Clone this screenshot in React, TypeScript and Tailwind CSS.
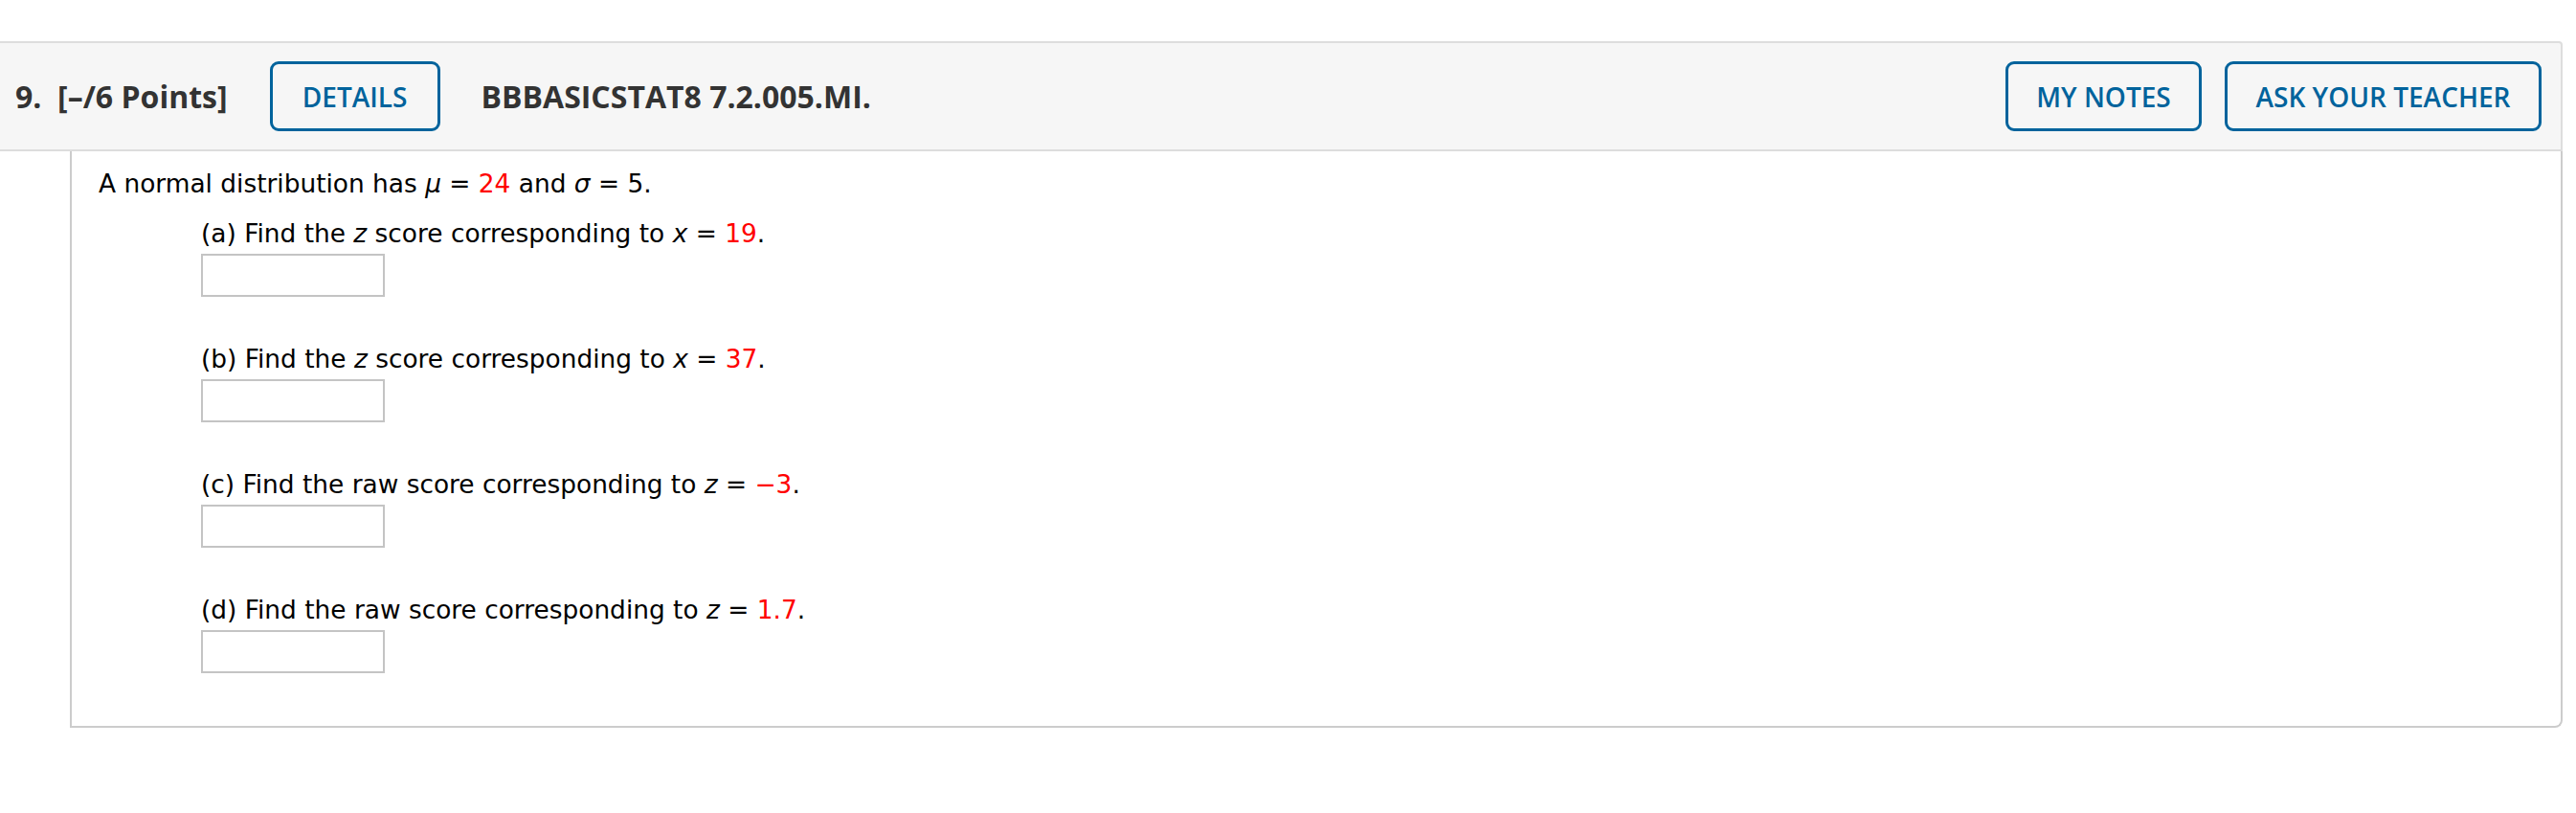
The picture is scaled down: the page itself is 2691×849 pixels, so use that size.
import React from "react";

const headFont = { fontFamily: '"Open Sans", "Liberation Sans", sans-serif' };

function OutlineButton({ children, className }: { children: React.ReactNode; className?: string }) {
    return (
        <button
            className={`h-[73px] rounded-[9px] border-[3px] border-[#00639c] bg-transparent text-[28px] font-semibold text-[#00639c] ${className ?? ""}`}
            style={headFont}
        >
            {children}
        </button>
    );
}

function Red({ children }: { children: React.ReactNode }) {
    return <span className="text-[#ff0000]">{children}</span>;
}

function AnswerBox() {
    return <div className="mt-[5px] h-[45px] w-[192px] border-2 border-[#c4c4c4] bg-white" />;
}

function Part({ label, children, first }: { label: string; children: React.ReactNode; first?: boolean }) {
    return (
        <div className={first ? "mt-[20px]" : "mt-[49px]"}>
            <p className="leading-[32px]">
                ({label}) {children}
            </p>
            <AnswerBox />
        </div>
    );
}

export default function App() {
    return (
        <div className="min-h-[849px] w-full bg-white pt-[43px]">
            <div
                className="mr-[14px] flex h-[115px] items-center rounded-tr-[4px] border-y-2 border-r-2 border-[#dddddd] bg-[#f6f6f6] pl-[16px] pr-[20px]"
                style={headFont}
            >
                <span className="whitespace-pre text-[32px] font-bold text-[#333333]">9.  [–/6 Points]</span>
                <OutlineButton className="ml-[44px] w-[178px]">DETAILS</OutlineButton>
                <span className="ml-[43px] text-[32px] font-bold text-[#333333]">BBBASICSTAT8 7.2.005.MI.</span>
                <div className="ml-auto flex gap-[24px]">
                    <OutlineButton className="w-[205px]">MY NOTES</OutlineButton>
                    <OutlineButton className="w-[331px]">ASK YOUR TEACHER</OutlineButton>
                </div>
            </div>
            <div
                className="mr-[14px] ml-[73px] rounded-br-[8px] border-x-2 border-b-2 border-[#cccccc] pb-[55px] pl-[28px] pt-[18px] text-[26.4px] text-black"
                style={{ fontFamily: '"DejaVu Sans", Verdana, sans-serif' }}
            >
                <p className="leading-[32px]">
                    A normal distribution has <i>μ</i> = <Red>24</Red> and <i>σ</i> = 5.
                </p>
                <div className="pl-[107px]">
                    <Part label="a" first>
                        Find the <i>z</i> score corresponding to <i>x</i> = <Red>19</Red>.
                    </Part>
                    <Part label="b">
                        Find the <i>z</i> score corresponding to <i>x</i> = <Red>37</Red>.
                    </Part>
                    <Part label="c">
                        Find the raw score corresponding to <i>z</i> = <Red>−3</Red>.
                    </Part>
                    <Part label="d">
                        Find the raw score corresponding to <i>z</i> = <Red>1.7</Red>.
                    </Part>
                </div>
            </div>
        </div>
    );
}
